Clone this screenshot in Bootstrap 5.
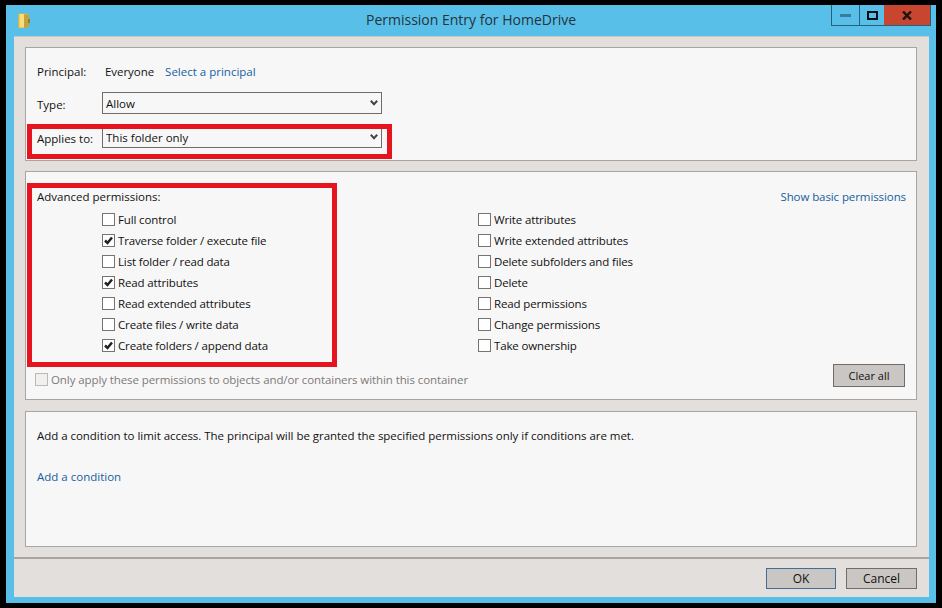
<!DOCTYPE html>
<html lang="en">
<head>
<meta charset="utf-8">
<title>Permission Entry for HomeDrive</title>
<link href="https://cdn.jsdelivr.net/npm/bootstrap@5.3.0/dist/css/bootstrap.min.css" rel="stylesheet">
<style>
html,body{margin:0;height:608px;overflow:hidden;background:#000}
body{font-family:"Open Sans","Noto Sans",sans-serif;font-size:11.5px;line-height:21px;color:#111;padding:5px 0 0 6px}
.win{position:relative;width:930px;height:598px;background:#58bfe8;display:flex;flex-direction:column;padding:0 7px 6px 8px}
.tbar{height:31px;flex:none;position:relative;display:flex;justify-content:center;align-items:center;font-size:14px;color:#25333c;padding-bottom:3px;padding-right:1px}
.ficon{position:absolute;left:3px;top:7px}
.caps{position:absolute;right:-2px;top:0;height:21px;display:flex;border:1px solid #27607a;border-top:0}
.capb{height:20px;display:flex;align-items:center;justify-content:center}
.capb+.capb{border-left:1px solid #27607a}
.c1{width:27px}.c2{width:25px}.c3{width:46px;background:#c8452f;border-left:0!important}
.client{flex:1;background:#e2dfdc;display:flex;flex-direction:column;padding-top:10px;border-top:1px solid #c9c6c4;min-height:0}
.pane{background:#f8f7f7;border:1px solid #a9a4a2;margin:0 12px 10px 11px;padding:0 11px}
.p1{height:114px;padding-top:12px}
.p2{height:229px;padding-top:14px;margin-bottom:11px}
.p3{height:136px;padding-top:13px}
.lbl{width:65px;flex:none}
.rw{height:22px}
.ra{margin-bottom:11px}
.rb{margin-bottom:12px}
.val{margin-left:3px;letter-spacing:-.05px}
.sel{margin-left:11px}
.fld{width:280px;height:22px;min-height:0;padding:2px 0 0 3px;font-size:11.500px;line-height:18px;color:#111;border:1px solid #6f6c6a;border-radius:0;background-color:#f8f7f7;background-size:8px 6px;background-position:right 3px center;margin-top:-2px;background-image:url("data:image/svg+xml,%3csvg xmlns='http://www.w3.org/2000/svg' viewBox='0 0 8 6'%3e%3cpath fill='none' stroke='%23444' stroke-width='2' d='M.8.800L4 4.200 7.200.8'/%3e%3c/svg%3e")}
.lnk{color:#14619f;text-decoration:none}
.hd{margin-bottom:2px}
.showb{margin-right:-1px;letter-spacing:-.09px}
.cols{display:grid;grid-template-columns:376px 1fr;margin-left:65px}
.pm{display:flex;align-items:center;height:21px;padding:0;margin:0;min-height:0}
.pm .form-check-input{float:none;margin:0 3px 0 0;width:13px;height:13px;border:1px solid #77736f;border-radius:0;background-color:#fff;flex:none;opacity:1}
.pm .form-check-input:checked{background-color:#fff;border-color:#77736f;background-size:11px 11px;background-image:url("data:image/svg+xml,%3csvg xmlns='http://www.w3.org/2000/svg' viewBox='0 0 11 11'%3e%3cpath fill='none' stroke='%23222' stroke-width='2.500' d='M2 5.500l2.500 2.500L9 2.500'/%3e%3c/svg%3e")}
.pm .form-check-label{opacity:1;letter-spacing:-.14px}
.pm.dis .form-check-input{border-color:#bdb9b6;background-color:#f1f0ef;opacity:1}
.pm.dis .form-check-input[disabled]~.form-check-label{color:#7d7a78;letter-spacing:-.09px;opacity:1}
.btm{margin-left:-2px;margin-top:8px}
.pm.dis{margin-top:5px}
.cond{letter-spacing:-.035px}
.winbtn{font-size:12px;line-height:19px;padding:0;height:21px;border:1px solid #6f6c6a;border-radius:0;background:#c9c6c3;color:#111}
.clr{width:72px;height:23px;font-size:11px}
.fsep{border-top:2px solid #aaa39f;padding:9px 12px 0 0;gap:10px}
.ok{width:70px;border-color:#3f6f99}
.cn{width:71px}
.redb{position:absolute;border:5px solid #e6141e;pointer-events:none}
.r1{left:21px;top:119px;width:365px;height:35px}
.r2{left:21px;top:178px;width:310px;height:184px}
</style>
</head>
<body>
<div class="win">
  <div class="tbar">
    <svg class="ficon" width="14" height="17" viewBox="0 0 14 17"><path d="M1 1.500h6l5 1v12l-5 1.500h-6z" fill="#d9b53e"/><path d="M2.500 2h4.500v13.500h-4.500z" fill="#f3e084"/><path d="M7 3l5-.5v12l-5 1.500z" fill="#c9a233"/><rect x="11" y="7" width="2" height="4" fill="#8f7b3c"/></svg>
    <span>Permission Entry for HomeDrive</span>
    <div class="caps">
      <div class="capb c1"><svg width="11" height="3" viewBox="0 0 11 3"><rect width="11" height="3" fill="#3a7d99"/></svg></div>
      <div class="capb c2"><svg width="11" height="9" viewBox="0 0 11 9"><rect x="1" y="1" width="9" height="7" fill="none" stroke="#0a0f14" stroke-width="2"/></svg></div>
      <div class="capb c3"><svg width="10" height="9" viewBox="0 0 10 9"><path d="M1 .5l8 8M9 .5l-8 8" stroke="#1c1210" stroke-width="2.400" fill="none"/></svg></div>
    </div>
  </div>
  <div class="client">
    <section class="pane p1">
      <div class="d-flex align-items-center rw ra"><span class="lbl">Principal:</span><span class="val">Everyone</span><a href="#" class="lnk sel">Select a principal</a></div>
      <div class="d-flex align-items-center rw rb"><span class="lbl">Type:</span><select class="form-select fld"><option>Allow</option></select></div>
      <div class="d-flex align-items-center rw"><span class="lbl">Applies to:</span><select class="form-select fld"><option>This folder only</option></select></div>
    </section>
    <section class="pane p2">
      <div class="d-flex justify-content-between hd"><span>Advanced permissions:</span><a href="#" class="lnk showb">Show basic permissions</a></div>
      <div class="cols">
        <div>
          <div class="form-check pm"><input class="form-check-input" type="checkbox" id="a1"><label class="form-check-label" for="a1">Full control</label></div>
          <div class="form-check pm"><input class="form-check-input" type="checkbox" id="a2" checked><label class="form-check-label" for="a2">Traverse folder / execute file</label></div>
          <div class="form-check pm"><input class="form-check-input" type="checkbox" id="a3"><label class="form-check-label" for="a3">List folder / read data</label></div>
          <div class="form-check pm"><input class="form-check-input" type="checkbox" id="a4" checked><label class="form-check-label" for="a4">Read attributes</label></div>
          <div class="form-check pm"><input class="form-check-input" type="checkbox" id="a5"><label class="form-check-label" for="a5">Read extended attributes</label></div>
          <div class="form-check pm"><input class="form-check-input" type="checkbox" id="a6"><label class="form-check-label" for="a6">Create files / write data</label></div>
          <div class="form-check pm"><input class="form-check-input" type="checkbox" id="a7" checked><label class="form-check-label" for="a7">Create folders / append data</label></div>
        </div>
        <div>
          <div class="form-check pm"><input class="form-check-input" type="checkbox" id="b1"><label class="form-check-label" for="b1">Write attributes</label></div>
          <div class="form-check pm"><input class="form-check-input" type="checkbox" id="b2"><label class="form-check-label" for="b2">Write extended attributes</label></div>
          <div class="form-check pm"><input class="form-check-input" type="checkbox" id="b3"><label class="form-check-label" for="b3">Delete subfolders and files</label></div>
          <div class="form-check pm"><input class="form-check-input" type="checkbox" id="b4"><label class="form-check-label" for="b4">Delete</label></div>
          <div class="form-check pm"><input class="form-check-input" type="checkbox" id="b5"><label class="form-check-label" for="b5">Read permissions</label></div>
          <div class="form-check pm"><input class="form-check-input" type="checkbox" id="b6"><label class="form-check-label" for="b6">Change permissions</label></div>
          <div class="form-check pm"><input class="form-check-input" type="checkbox" id="b7"><label class="form-check-label" for="b7">Take ownership</label></div>
        </div>
      </div>
      <div class="d-flex justify-content-between align-items-start btm">
        <div class="form-check pm dis"><input class="form-check-input" type="checkbox" id="c1" disabled><label class="form-check-label" for="c1">Only apply these permissions to objects and/or containers within this container</label></div>
        <button type="button" class="btn winbtn clr">Clear all</button>
      </div>
    </section>
    <section class="pane p3">
      <div class="cond">Add a condition to limit access. The principal will be granted the specified permissions only if conditions are met.</div>
      <div class="mt-3 pt-1"><a href="#" class="lnk">Add a condition</a></div>
    </section>
    <div class="d-flex justify-content-end fsep">
      <button type="button" class="btn winbtn ok">OK</button>
      <button type="button" class="btn winbtn cn">Cancel</button>
    </div>
  </div>
  <div class="redb r1"></div>
  <div class="redb r2"></div>
</div>
<script src="https://cdn.jsdelivr.net/npm/bootstrap@5.3.0/dist/js/bootstrap.bundle.min.js"></script>
</body>
</html>
